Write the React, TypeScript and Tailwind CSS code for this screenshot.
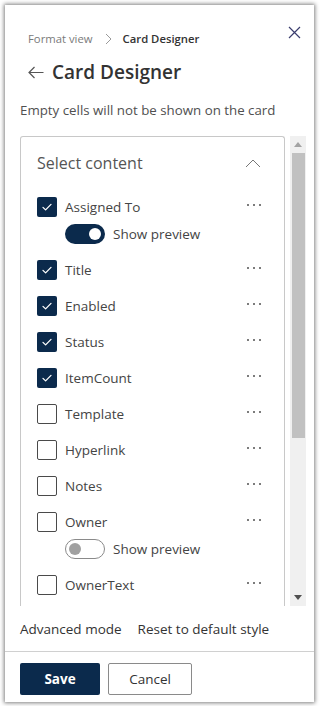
import { useState } from "react"

type Field = { name: string; checked: boolean; preview?: boolean }

const fields: Field[] = [
  { name: "Assigned To", checked: true, preview: true },
  { name: "Title", checked: true },
  { name: "Enabled", checked: true },
  { name: "Status", checked: true },
  { name: "ItemCount", checked: true },
  { name: "Template", checked: false },
  { name: "Hyperlink", checked: false },
  { name: "Notes", checked: false },
  { name: "Owner", checked: false, preview: false },
  { name: "OwnerText", checked: false },
]

function Checkbox({ checked }: { checked: boolean }) {
  if (checked) {
    return (
      <div className="flex h-5 w-5 shrink-0 items-center justify-center rounded-[2px] bg-[#0b2a4c]">
        <svg width="12" height="12" viewBox="0 0 12 12" fill="none">
          <path d="M2 6.4l2.6 2.5L10 3.4" stroke="white" strokeWidth="1.3" strokeLinecap="round" strokeLinejoin="round" />
        </svg>
      </div>
    )
  }
  return <div className="h-5 w-5 shrink-0 rounded-[2px] border border-[#4a4a4a] bg-white" />
}

function Toggle({ on }: { on: boolean }) {
  if (on) {
    return (
      <div className="flex h-5 w-10 items-center justify-end rounded-full bg-[#0b2a4c] pr-1">
        <div className="h-3 w-3 rounded-full bg-white" />
      </div>
    )
  }
  return (
    <div className="flex h-5 w-10 items-center rounded-full border border-[#8a8a8a] bg-white pl-[3px]">
      <div className="h-3 w-3 rounded-full bg-[#a0a0a0]" />
    </div>
  )
}

function Dots() {
  return (
    <div className="mb-1 flex gap-[4px]">
      <span className="h-[2px] w-[2px] rounded-full bg-[#505050]" />
      <span className="h-[2px] w-[2px] rounded-full bg-[#505050]" />
      <span className="h-[2px] w-[2px] rounded-full bg-[#505050]" />
    </div>
  )
}

function App() {
  const [items] = useState(fields)

  return (
    <div className="min-h-screen bg-white p-[5px] font-['Open_Sans',sans-serif]">
      <div className="flex h-[697px] w-[309px] flex-col bg-white shadow-[0_0_4px_1px_rgba(0,0,0,0.5)]">
        {/* header */}
        <div className="flex items-start pl-[23px] pr-[13px] pt-[24px]">
          <div className="flex h-5 items-center text-[11.3px]">
            <span className="text-[#7a7a7a]">Format view</span>
            <svg className="ml-3 mr-[11px]" width="7" height="12" viewBox="0 0 7 12" fill="none">
              <path d="M1 1l5 5-5 5" stroke="#9a9a9a" strokeWidth="1" />
            </svg>
            <span className="font-semibold text-[#333]">Card Designer</span>
          </div>
          <button className="ml-auto -mt-[3px]">
            <svg width="13" height="13" viewBox="0 0 13 13" fill="none">
              <path d="M1 1l11 11M12 1L1 12" stroke="#3a3d6e" strokeWidth="1.2" />
            </svg>
          </button>
        </div>

        <div className="mt-[9px] flex h-7 items-center pl-[23px]">
          <svg width="16" height="13" viewBox="0 0 16 13" fill="none">
            <path d="M15.5 6.5H1M6.5 1L1 6.5 6.5 12" stroke="#555" strokeWidth="1.2" />
          </svg>
          <h1 className="ml-2 text-[19px] font-semibold text-[#333]">Card Designer</h1>
        </div>

        <p className="mt-[14px] h-5 px-[15px] text-[13.3px] leading-5 text-[#505050]">
          Empty cells will not be shown on the card
        </p>

        {/* content list */}
        <div className="mt-4 flex h-[470px] shrink-0 pl-[15px]">
          <div className="h-full w-[265px] overflow-hidden rounded-t-[3px] border border-b-0 border-[#c8c8c8]">
            <div className="pl-4 pr-[23px] pt-[14px]">
              <div className="flex h-6 items-center justify-between">
                <span className="text-[16px] text-[#555]">Select content</span>
                <svg width="16" height="9" viewBox="0 0 16 9" fill="none">
                  <path d="M1 8l7-7 7 7" stroke="#777" strokeWidth="1" />
                </svg>
              </div>
              <div className="mt-[22px] flex flex-col gap-4">
                {items.map((f) => (
                  <div key={f.name}>
                    <div className="flex h-5 items-center">
                      <Checkbox checked={f.checked} />
                      <span className="ml-2 text-[13.5px] text-[#444]">{f.name}</span>
                      <div className="ml-auto">
                        <Dots />
                      </div>
                    </div>
                    {f.preview !== undefined && (
                      <div className="mt-[7px] flex h-5 items-center pl-7">
                        <Toggle on={f.preview} />
                        <span className="ml-2 text-[13.5px] text-[#444]">Show preview</span>
                      </div>
                    )}
                  </div>
                ))}
              </div>
            </div>
          </div>

          {/* scrollbar */}
          <div className="ml-[5px] flex h-full w-4 flex-col items-center bg-[#f0f0f0]">
            <div className="flex h-[17px] items-center justify-center">
              <svg width="8" height="5" viewBox="0 0 8 5">
                <path d="M4 0L8 5H0z" fill="#a3a3a3" />
              </svg>
            </div>
            <div className="h-[285px] w-[13px] bg-[#c1c1c1]" />
            <div className="mt-auto flex h-[17px] items-center justify-center">
              <svg width="8" height="5" viewBox="0 0 8 5">
                <path d="M0 0h8L4 5z" fill="#505050" />
              </svg>
            </div>
          </div>
        </div>

        <div className="mt-[13px] flex h-5 shrink-0 items-center gap-4 px-[15px] text-[13.5px] text-[#333]">
          <span>Advanced mode</span>
          <span>Reset to default style</span>
        </div>

        <div className="mt-3 border-t border-[#d0d0d0]" />

        <div className="flex gap-2 px-[15px] pt-[11px]">
          <button className="h-8 w-20 rounded-[2px] bg-[#0b2a4c] text-[13.5px] font-bold text-white">Save</button>
          <button className="h-8 w-[84px] rounded-[2px] border border-[#8a8a8a] bg-white text-[13.5px] text-[#333]">
            Cancel
          </button>
        </div>
      </div>
    </div>
  )
}

export default App
